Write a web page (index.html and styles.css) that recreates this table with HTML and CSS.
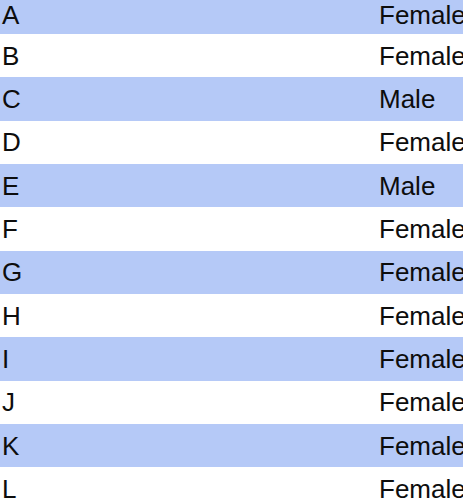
FILE: index.html
```html
<!DOCTYPE html>
<html>
<head>
<meta charset="utf-8">
<link rel="stylesheet" href="styles.css">
</head>
<body>
<div class="table">
  <div class="row odd first"><span class="name">A</span><span class="sex">Female</span></div>
  <div class="row"><span class="name">B</span><span class="sex">Female</span></div>
  <div class="row odd"><span class="name">C</span><span class="sex">Male</span></div>
  <div class="row"><span class="name">D</span><span class="sex">Female</span></div>
  <div class="row odd"><span class="name">E</span><span class="sex">Male</span></div>
  <div class="row"><span class="name">F</span><span class="sex">Female</span></div>
  <div class="row odd"><span class="name">G</span><span class="sex">Female</span></div>
  <div class="row"><span class="name">H</span><span class="sex">Female</span></div>
  <div class="row odd"><span class="name">I</span><span class="sex">Female</span></div>
  <div class="row"><span class="name">J</span><span class="sex">Female</span></div>
  <div class="row odd"><span class="name">K</span><span class="sex">Female</span></div>
  <div class="row"><span class="name">L</span><span class="sex">Female</span></div>
</div>
</body>
</html>
```
FILE: styles.css
```css
html, body {
  margin: 0;
  padding: 0;
  background: #ffffff;
  overflow: hidden;
}
.table {
  margin-top: -9.33px;
  display: flex;
  flex-direction: column;
  font-family: "Liberation Sans", Arial, sans-serif;
  font-size: 26px;
  color: #0d0d0d;
}
.row {
  box-sizing: border-box;
  height: 43.33px;
  display: grid;
  grid-template-columns: 379px 1fr;
  align-items: center;
  white-space: nowrap;
  overflow: hidden;
  padding-top: 1px;
}
.row.first {
  padding-top: 6px;
}
.row.odd {
  background: #b5c9f7;
}
.name {
  padding-left: 2px;
}
.sex {
  overflow: hidden;
}
```
